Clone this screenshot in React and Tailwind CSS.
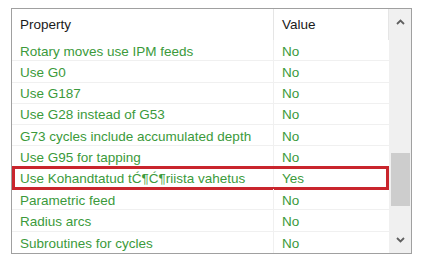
import React from "react";

const rows = [
  ["Rotary moves use IPM feeds", "No"],
  ["Use G0", "No"],
  ["Use G187", "No"],
  ["Use G28 instead of G53", "No"],
  ["G73 cycles include accumulated depth", "No"],
  ["Use G95 for tapping", "No"],
  ["Use Kohandtatud tĆ¶Ć¶riista vahetus", "Yes", true],
  ["Parametric feed", "No"],
  ["Radius arcs", "No"],
  ["Subroutines for cycles", "No"],
];

export default function App() {
  return (
    <div
      className="w-[427px] h-[270px] bg-white pl-[11px] pt-[8px]"
      style={{ fontFamily: '"Liberation Sans", Arial, sans-serif' }}
    >
      <div className="w-[401px] h-[246px] border border-[#a0a0a0] flex">
        <div className="w-[377px] flex flex-col">
          <div className="h-[31px] flex shrink-0 text-[13.5px] text-[#1a1a1a]">
            <div className="w-[262px] pl-[8px] pt-[2px] flex items-center border-r border-[#e5e5e5]">
              Property
            </div>
            <div className="flex-1 pl-[8px] pt-[2px] flex items-center border-r border-[#e5e5e5]">
              Value
            </div>
          </div>
          {rows.map(([k, v, hl], i) => (
            <div
              key={i}
              className={
                "relative h-[21.3px] flex shrink-0 text-[13.5px] text-[#3b9a3b] " +
                (i < rows.length - 1 ? "border-b border-[#f0f0f0]" : "")
              }
            >
              <div className="w-[262px] pl-[8px] pt-[3px] flex items-center border-r border-[#f0f0f0] whitespace-nowrap overflow-hidden">
                {k}
              </div>
              <div className="flex-1 pl-[8px] pt-[3px] flex items-center">{v}</div>
              {hl && (
                <div className="absolute left-0 right-0 top-[-2px] bottom-[-2px] border-[3px] border-[#c9252d]" />
              )}
            </div>
          ))}
        </div>
        <div className="w-[22px] bg-[#f0f0f0] flex flex-col items-center">
          <div className="h-[26px] w-full flex items-center justify-center">
            <svg width="9" height="6" viewBox="0 0 9 6">
              <path d="M1 5 L4.5 1.5 L8 5" fill="none" stroke="#606060" strokeWidth="1.8" />
            </svg>
          </div>
          <div className="h-[118px]" />
          <div className="w-[19px] h-[53px] bg-[#cdcdcd]" />
          <div className="flex-1" />
          <div className="h-[26px] w-full flex items-center justify-center">
            <svg width="9" height="6" viewBox="0 0 9 6">
              <path d="M1 1 L4.5 4.5 L8 1" fill="none" stroke="#606060" strokeWidth="1.8" />
            </svg>
          </div>
        </div>
      </div>
    </div>
  );
}
